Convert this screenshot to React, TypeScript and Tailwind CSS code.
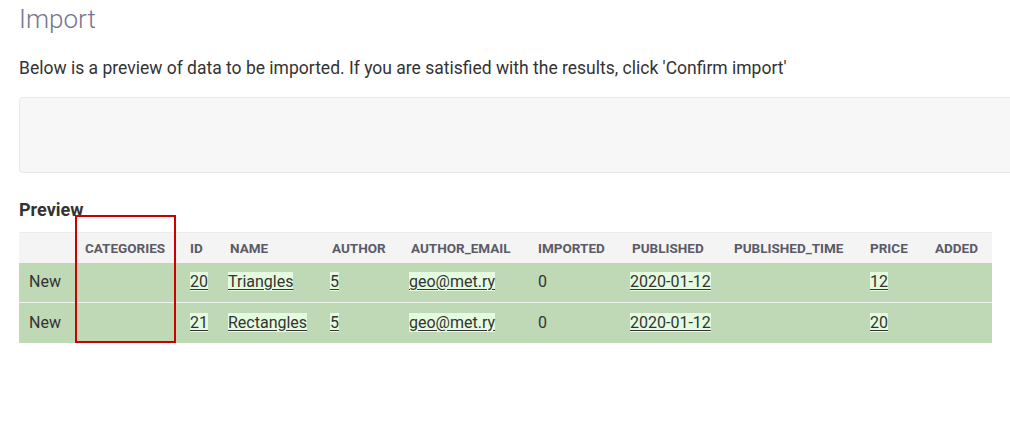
import React from 'react';

type Row = {
  status: string;
  id: string;
  name: string;
  author: string;
  email: string;
  imported: string;
  published: string;
  price: string;
};

const columns = [
  { label: '', w: 'w-[56px]' },
  { label: 'CATEGORIES', w: 'w-[105px]' },
  { label: 'ID', w: 'w-[40px]' },
  { label: 'NAME', w: 'w-[102px]' },
  { label: 'AUTHOR', w: 'w-[79px]' },
  { label: 'AUTHOR_EMAIL', w: 'w-[127px]' },
  { label: 'IMPORTED', w: 'w-[94px]' },
  { label: 'PUBLISHED', w: 'w-[102px]' },
  { label: 'PUBLISHED_TIME', w: 'w-[136px]' },
  { label: 'PRICE', w: 'w-[65px]' },
  { label: 'ADDED', w: 'w-[67px]' },
];

const rows: Row[] = [
  { status: 'New', id: '20', name: 'Triangles', author: '5', email: 'geo@met.ry', imported: '0', published: '2020-01-12', price: '12' },
  { status: 'New', id: '21', name: 'Rectangles', author: '5', email: 'geo@met.ry', imported: '0', published: '2020-01-12', price: '20' },
];

const Link: React.FC<{ children: React.ReactNode }> = ({ children }) => (
  <a href="#" className="bg-[#e4fbdf] text-[#333] underline underline-offset-2">
    {children}
  </a>
);

const App: React.FC = () => {
  return (
    <div className="w-[1010px] h-[429px] overflow-hidden bg-white font-['Roboto',sans-serif] text-[#333]">
      <div className="pl-[19px]">
        {/* Page title */}
        <h1 className="text-[26px] leading-[38px] font-light text-[#76768e]">Import</h1>

        <p className="mt-[18px] text-[17.5px] leading-[24px]">
          Below is a preview of data to be imported. If you are satisfied with the results, click 'Confirm import'
        </p>

        {/* Empty message well */}
        <div className="mt-[17px] h-[76px] w-[1040px] rounded-[4px] border border-[#e9e9e9] bg-[#f7f7f7]"></div>

        {/* Preview table */}
        <div className="relative mt-[25px] w-[973px]">
          <h3 className="text-[18px] leading-[24px] font-bold text-[#333]">Preview</h3>
          <table className="mt-[10px] w-[973px] table-fixed border-collapse">
            <thead>
              <tr className="h-[30px] bg-[#f4f4f4] border-t border-[#ececec]">
                {columns.map((c) => (
                  <th
                    key={c.label || 'status'}
                    className={`${c.w} pl-[10px] text-left text-[13.5px] font-bold text-[#5b5b68] whitespace-nowrap`}
                  >
                    {c.label}
                  </th>
                ))}
              </tr>
            </thead>
            <tbody>
              {rows.map((r, i) => (
                <tr key={r.id} className={`h-[40px] bg-[#bfd8b6] text-[16px] ${i > 0 ? 'border-t border-[#eef3ec]' : ''}`}>
                  <td className="pl-[10px]">{r.status}</td>
                  <td className="pl-[10px]"></td>
                  <td className="pl-[10px]"><Link>{r.id}</Link></td>
                  <td className="pl-[8px] whitespace-nowrap"><Link>{r.name}</Link></td>
                  <td className="pl-[8px]"><Link>{r.author}</Link></td>
                  <td className="pl-[8px]"><Link>{r.email}</Link></td>
                  <td className="pl-[10px]">{r.imported}</td>
                  <td className="pl-[8px]"><Link>{r.published}</Link></td>
                  <td className="pl-[10px]"></td>
                  <td className="pl-[10px]"><Link>{r.price}</Link></td>
                  <td className="pl-[10px]"></td>
                </tr>
              ))}
            </tbody>
          </table>
          {/* Highlight annotation around the categories column */}
          <div className="absolute left-[56px] top-[17px] w-[101px] h-[128px] border-2 border-[#cc0000] pointer-events-none"></div>
        </div>
      </div>
    </div>
  );
};

export default App;
